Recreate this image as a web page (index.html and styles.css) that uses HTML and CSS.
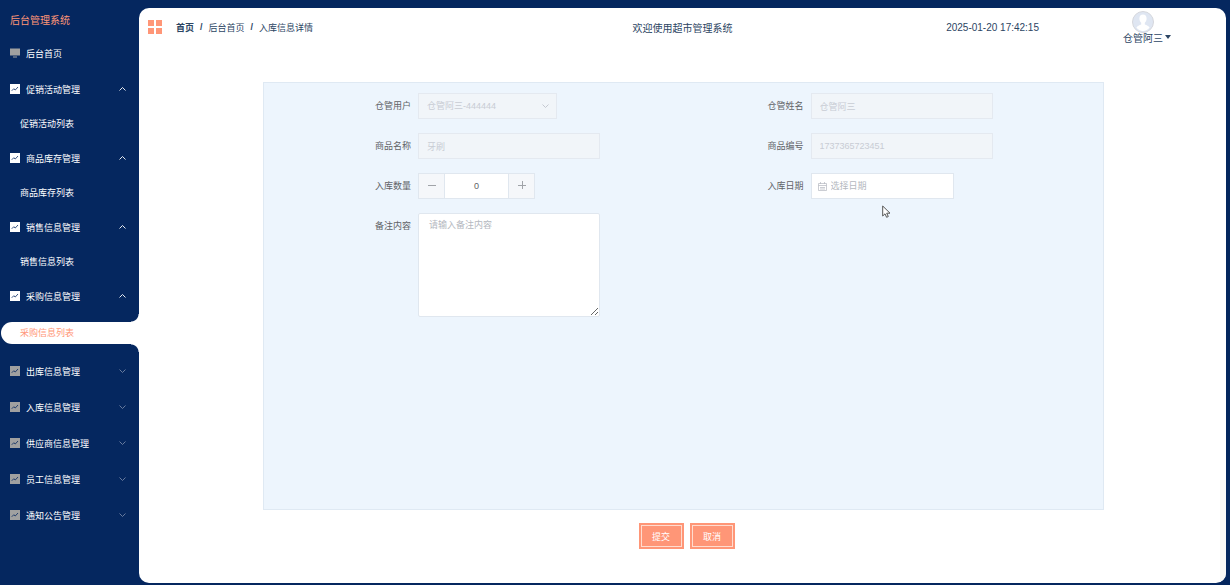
FILE: index.html
```html
<!DOCTYPE html>
<html lang="zh-CN">
<head>
  <meta charset="UTF-8">
  <meta name="viewport" content="width=device-width, initial-scale=1.0">
  <title>后台管理系统</title>
  <link rel="stylesheet" href="styles.css">
</head>
<body>
  <!-- shared icons -->
  <svg class="sprite" aria-hidden="true">
    <symbol id="chart" viewBox="0 0 20 20">
      <path fill="currentColor" d="M0 0h20v20H0z"/>
      <path fill="none" stroke="#05275f" stroke-width="1.6" d="M3.5 13.5l4-4 3 2.5 5.500-6"/>
    </symbol>
    <symbol id="arrow" viewBox="0 0 14 8">
      <path fill="none" stroke="currentColor" stroke-width="1.8" d="M1 7l6-6 6 6"/>
    </symbol>
  </svg>

  <div class="layout">
    <aside class="sidebar">
      <div class="logo">后台管理系统</div>
      <nav class="menu">
        <a class="item" href="#">
          <svg class="icon off" viewBox="0 0 20 20"><path fill="currentColor" d="M0 1h20v14H0zM6 17h8v2H6z"/></svg>
          <span>后台首页</span>
        </a>
        <a class="item" href="#"><svg class="icon"><use href="#chart"/></svg><span>促销活动管理</span><svg class="arrow"><use href="#arrow"/></svg></a>
        <a class="sub" href="#">促销活动列表</a>
        <a class="item" href="#"><svg class="icon"><use href="#chart"/></svg><span>商品库存管理</span><svg class="arrow"><use href="#arrow"/></svg></a>
        <a class="sub" href="#">商品库存列表</a>
        <a class="item" href="#"><svg class="icon"><use href="#chart"/></svg><span>销售信息管理</span><svg class="arrow"><use href="#arrow"/></svg></a>
        <a class="sub" href="#">销售信息列表</a>
        <a class="item" href="#"><svg class="icon"><use href="#chart"/></svg><span>采购信息管理</span><svg class="arrow"><use href="#arrow"/></svg></a>
        <a class="sub active" href="#">采购信息列表</a>
        <a class="item" href="#"><svg class="icon off"><use href="#chart"/></svg><span>出库信息管理</span><svg class="arrow down"><use href="#arrow"/></svg></a>
        <a class="item" href="#"><svg class="icon off"><use href="#chart"/></svg><span>入库信息管理</span><svg class="arrow down"><use href="#arrow"/></svg></a>
        <a class="item" href="#"><svg class="icon off"><use href="#chart"/></svg><span>供应商信息管理</span><svg class="arrow down"><use href="#arrow"/></svg></a>
        <a class="item" href="#"><svg class="icon off"><use href="#chart"/></svg><span>员工信息管理</span><svg class="arrow down"><use href="#arrow"/></svg></a>
        <a class="item" href="#"><svg class="icon off"><use href="#chart"/></svg><span>通知公告管理</span><svg class="arrow down"><use href="#arrow"/></svg></a>
      </nav>
    </aside>

    <main class="main">
      <header class="header">
        <div class="crumbs">
          <svg class="grid-icon" viewBox="0 0 14 14"><path fill="#ff9677" d="M0 0h6v6H0zM8 0h6v6H8zM0 8h6v6H0zM8 8h6v6H8z"/></svg>
          <a class="home" href="#">首页</a><b>/</b><a href="#">后台首页</a><b>/</b><span>入库信息详情</span>
        </div>
        <div class="welcome">欢迎使用超市管理系统</div>
        <div class="right">
          <time>2025-01-20 17:42:15</time>
          <div class="user">
            <svg class="avatar" viewBox="0 0 22 22">
              <circle cx="11" cy="11" r="10.500" fill="#dfe6f2" stroke="#d5d7dc"/>
              <path fill="#fff" d="M11 3.500c2.300 0 3.600 1.600 3.600 3.900 0 2-.8 3.500-1.800 4.400v1.700c1.900.7 3.800 1.400 4.800 2.900A8.600 8.600 0 0 1 11 20a8.600 8.600 0 0 1-6.600-3.600c1-1.500 2.900-2.200 4.800-2.900v-1.700c-1-.9-1.800-2.400-1.800-4.400 0-2.300 1.300-3.900 3.600-3.900z"/>
            </svg>
            <div class="name">仓管阿三<svg class="caret" viewBox="0 0 6 4"><path fill="currentColor" d="M0 0h6L3 4z"/></svg></div>
          </div>
        </div>
      </header>

      <form class="content">
        <div class="panel">
          <div class="field">
            <label for="user">仓管用户</label>
            <div class="select">
              <select id="user" disabled><option>仓管阿三-444444</option></select>
              <svg class="arrow down"><use href="#arrow"/></svg>
            </div>
          </div>
          <div class="field">
            <label for="name">仓管姓名</label>
            <input class="text" id="name" type="text" value="仓管阿三" disabled>
          </div>
          <div class="field">
            <label for="goods">商品名称</label>
            <input class="text" id="goods" type="text" value="牙刷" disabled>
          </div>
          <div class="field">
            <label for="code">商品编号</label>
            <input class="text" id="code" type="text" value="1737365723451" disabled>
          </div>
          <div class="field">
            <label for="count">入库数量</label>
            <div class="number">
              <button type="button" aria-label="-"><svg viewBox="0 0 8 8"><path stroke="currentColor" d="M0 4.500h8"/></svg></button>
              <input id="count" type="text" value="0">
              <button type="button" aria-label="+"><svg viewBox="0 0 8 8"><path stroke="currentColor" d="M0 4.500h8M4.500 0v8"/></svg></button>
            </div>
          </div>
          <div class="field">
            <label for="date">入库日期</label>
            <div class="date">
              <svg viewBox="0 0 9 9"><path fill="none" stroke="currentColor" d="M.5 1.500h8v7h-8zM.5 3.500h8M2.500 0v2M6.500 0v2M2 5.500h5M2 7h5" stroke-width=".7"/></svg>
              <input id="date" type="text" placeholder="选择日期">
            </div>
          </div>
          <div class="field">
            <label for="remark">备注内容</label>
            <textarea id="remark" placeholder="请输入备注内容"></textarea>
          </div>
        </div>
        <div class="btns">
          <button type="submit">提交</button>
          <button type="button">取消</button>
        </div>
      </form>
    </main>
  </div>

  <svg class="cursor" viewBox="0 0 9 13"><path fill="#fff" stroke="#555" d="M.7 1v10l2.300-2.200 1.600 3.500 1.700-.8-1.600-3.300H8z"/></svg>
</body>
</html>
```
FILE: styles.css
```css
* {
  margin: 0;
  padding: 0;
  box-sizing: border-box;
}

body {
  background: #05275f;
  font-family: "Liberation Sans", "Noto Sans CJK SC", sans-serif;
  font-size: 9px;
  color: #2c4563;
}

a {
  color: inherit;
  text-decoration: none;
}

input, select, textarea, button {
  font: inherit;
  color: inherit;
  outline: none;
}

.sprite {
  display: none;
}

.layout {
  display: flex;
  min-height: 100vh;
}

/* sidebar */
.sidebar {
  width: 139px;
  flex-shrink: 0;
  color: #fff;
}

.logo {
  height: 35px;
  padding: 6px 10px 0;
  line-height: 29px;
  font-size: 10px;
  color: #ff9677;
}

.item {
  display: flex;
  align-items: center;
  height: 36px;
  padding: 0 13px 0 10px;
}

.icon {
  width: 10px;
  height: 10px;
  margin-right: 6px;
}

.icon.off {
  color: #a0a0a0;
}

.arrow {
  width: 7px;
  height: 4px;
  margin-left: auto;
}

.arrow.down {
  transform: rotate(180deg);
}

.item .down {
  color: #7485a5;
}

.sub {
  display: block;
  height: 33px;
  padding-left: 20px;
  line-height: 35px;
}

.sub.active {
  position: relative;
  height: 22px;
  margin: 8px 0 9px 1px;
  padding-left: 19px;
  line-height: 23px;
  border-radius: 11px 0 0 11px;
  background: #fff;
  color: #ff9677;
}

/* inverted corners where the tab joins the page */
.sub.active::before,
.sub.active::after {
  content: "";
  position: absolute;
  right: 0;
  width: 8px;
  height: 8px;
}

.sub.active::before {
  top: -8px;
  background: radial-gradient(circle at 0 0, #05275f 7px, #fff 8px);
}

.sub.active::after {
  bottom: -8px;
  background: radial-gradient(circle at 0 100%, #05275f 7px, #fff 8px);
}

/* page */
.main {
  position: relative;
  flex: 1;
  margin: 8px 4px 2px 0;
  border-radius: 10px;
  background: #fff;
  overflow: hidden;
}

.main::after {
  content: "";
  position: absolute;
  right: 0;
  bottom: 0;
  width: 6px;
  height: 103px;
  background: #f8f8f8;
}

.header {
  display: grid;
  grid-template-columns: 1fr auto 1fr;
  align-items: center;
  height: 38px;
  padding: 0 9px;
}

.crumbs {
  display: flex;
  align-items: center;
}

.crumbs b {
  padding: 0 6px;
}

.grid-icon {
  width: 14px;
  height: 14px;
  margin-right: 14px;
}

.home {
  font-weight: bold;
}

.welcome,
.right {
  font-size: 10px;
}

.right {
  display: flex;
  align-items: center;
  justify-content: flex-end;
  gap: 84px;
  padding-right: 46px;
}

.user {
  padding-top: 2px;
}

.avatar {
  display: block;
  width: 22px;
  height: 22px;
  margin-left: 9px;
}

.name {
  line-height: 12px;
}

.caret {
  width: 6px;
  height: 4px;
  margin-left: 2px;
  vertical-align: 3px;
}

/* form */
.content {
  padding: 36px 122px 0 124px;
}

.panel {
  display: grid;
  grid-template-columns: 1fr 1fr;
  align-content: start;
  gap: 14px 0;
  min-height: 428px;
  padding: 10px 27px;
  border: 1px solid #dfe9f3;
  background: #edf5fd;
}

.field {
  display: flex;
}

.field label {
  width: 120px;
  margin-right: 7px;
  line-height: 27px;
  text-align: right;
  color: #606266;
}

.text,
.select select,
.date input,
.number,
.field textarea {
  height: 26px;
  border: 1px solid #e0e7ef;
  background: #fff;
  color: #606266;
}

.field {
  align-items: flex-start;
}

.text,
.field textarea {
  width: 182px;
}

.text {
  padding: 0 8px;
}

.text:disabled,
.select select:disabled {
  border-color: #e4e9f0;
  background: #f1f5f9;
  color: #c8ccd4;
  opacity: 1;
}

.select {
  position: relative;
  width: 139px;
  height: 26px;
}

.select select {
  width: 100%;
  padding: 0 8px;
  appearance: none;
}

.select .arrow {
  position: absolute;
  top: 11px;
  right: 8px;
  color: #c0c4cc;
}

/* label line is a pixel taller than the control */
.panel .field {
  margin-bottom: -1px;
}

.number {
  display: flex;
  width: 117px;
}

.number button {
  width: 25px;
  border: 0;
  background: #f5f7fa;
  color: #a0a3a8;
}

.number svg {
  width: 8px;
  height: 8px;
}

.number input {
  flex: 1;
  min-width: 0;
  border: solid #e0e7ef;
  border-width: 0 1px;
  text-align: center;
}

.date {
  position: relative;
  width: 143px;
  height: 26px;
}

.date svg {
  position: absolute;
  top: 9px;
  left: 7px;
  width: 9px;
  height: 9px;
  color: #b4b8c0;
}

.date input {
  width: 100%;
  padding: 0 8px 0 19px;
}

.field textarea {
  height: 104px;
  padding: 4px 10px;
  border-radius: 2px;
}

::placeholder {
  color: #b4b8c0;
}

.btns {
  display: flex;
  justify-content: center;
  gap: 6px;
  padding: 13px 0 13px 6px;
}

.btns button {
  width: 45px;
  height: 26px;
  border: 1px solid #ff9677;
  outline: 1px solid #ffdccf;
  outline-offset: -3px;
  background: #ff9677;
  color: #fff;
}

.cursor {
  position: absolute;
  top: 205px;
  left: 882px;
  width: 9px;
  height: 13px;
}
```
